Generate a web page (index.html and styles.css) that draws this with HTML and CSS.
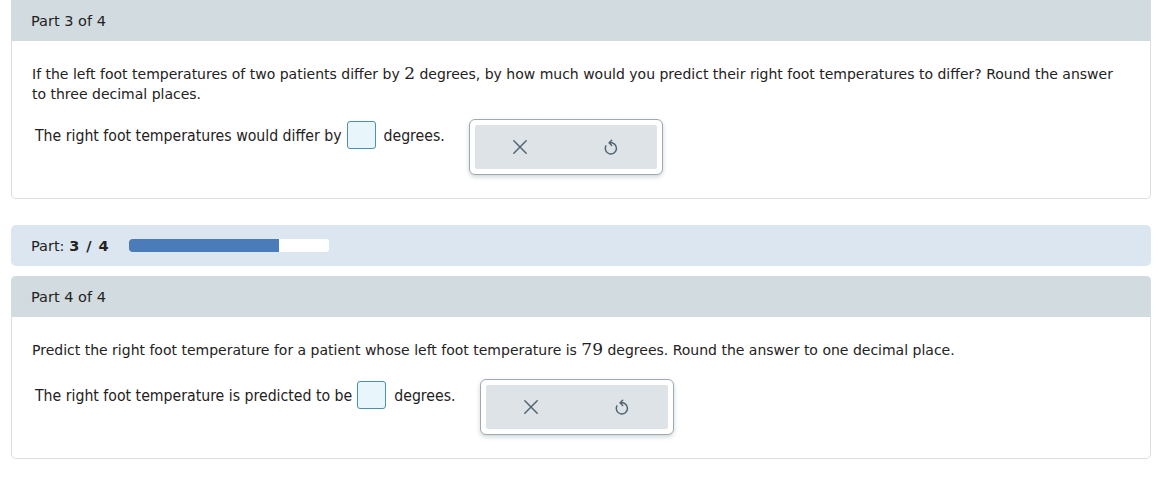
FILE: index.html
```html
<!DOCTYPE html>
<html>
<head>
<meta charset="utf-8">
<link rel="stylesheet" href="styles.css">
</head>
<body>
<div class="page">
  <section class="card">
    <div class="card-head">Part 3 of 4</div>
    <div class="card-body">
      <p class="question">If the left foot temperatures of two patients differ by <span class="num">2</span> degrees, by how much would you predict their right foot temperatures to differ? Round the answer to three decimal places.</p>
      <div class="answer">
        <span class="answer-text">The right foot temperatures would differ by</span>
        <span class="box"></span>
        <span class="answer-text unit">degrees.</span>
        <div class="tools">
          <div class="tools-inner">
            <svg class="ico" width="18" height="18" viewBox="0 0 16 16"><path d="M2.5 2.5 L13.5 13.5 M13.5 2.5 L2.5 13.5" stroke="#4f6470" stroke-width="1.3" fill="none" stroke-linecap="round"/></svg>
            <svg class="ico" width="18" height="18" viewBox="0 0 16 16"><path d="M6.6 4.4 A5 5 0 1 1 3.4 7" stroke="#4f6470" stroke-width="1.3" fill="none" stroke-linecap="round"/><path d="M8.6 2 L6.4 4.3 L8.6 6.6" stroke="#4f6470" stroke-width="1.3" fill="none" stroke-linecap="round" stroke-linejoin="round"/></svg>
          </div>
        </div>
      </div>
    </div>
  </section>

  <div class="progress">
    <span class="plabel">Part: <b>3 / 4</b></span>
    <div class="track"><div class="fill" style="width:75%"></div></div>
  </div>

  <section class="card card2">
    <div class="card-head">Part 4 of 4</div>
    <div class="card-body">
      <p class="question">Predict the right foot temperature for a patient whose left foot temperature is <span class="num">79</span> degrees. Round the answer to one decimal place.</p>
      <div class="answer answer2">
        <span class="answer-text">The right foot temperature is predicted to be</span>
        <span class="box"></span>
        <span class="answer-text unit">degrees.</span>
        <div class="tools">
          <div class="tools-inner">
            <svg class="ico" width="18" height="18" viewBox="0 0 16 16"><path d="M2.5 2.5 L13.5 13.5 M13.5 2.5 L2.5 13.5" stroke="#4f6470" stroke-width="1.3" fill="none" stroke-linecap="round"/></svg>
            <svg class="ico" width="18" height="18" viewBox="0 0 16 16"><path d="M6.6 4.4 A5 5 0 1 1 3.4 7" stroke="#4f6470" stroke-width="1.3" fill="none" stroke-linecap="round"/><path d="M8.6 2 L6.4 4.3 L8.6 6.6" stroke="#4f6470" stroke-width="1.3" fill="none" stroke-linecap="round" stroke-linejoin="round"/></svg>
          </div>
        </div>
      </div>
    </div>
  </section>
</div>
</body>
</html>
```

FILE: styles.css
```css
html, body {
  margin: 0;
  padding: 0;
  background: #ffffff;
}
body {
  font-family: "DejaVu Sans", Verdana, sans-serif;
  font-size: 14px;
  color: #222222;
}
.page {
  width: 1140px;
  margin-left: 11px;
}
.card {
  border: 1px solid #dcdfe1;
  border-top: none;
  border-radius: 0 0 5px 5px;
  background: #fff;
}
.card2 {
  margin-top: 10px;
  border-radius: 5px;
}
.card2 .card-head {
  border-radius: 5px 5px 0 0;
}
.card-head {
  background: #d2dbdf;
  height: 41px;
  display: flex;
  align-items: center;
  padding-left: 20px;
  margin: 0 -1px;
  font-size: 14.5px;
  color: #222;
}
.card-body {
  padding: 22px 20px 23px 20px;
}
.question {
  margin: 0;
  line-height: 20px;
  font-size: 14px;
}
.num {
  font-family: "DejaVu Serif", "Liberation Serif", serif;
  font-size: 17px;
}
.answer {
  display: flex;
  align-items: flex-start;
  margin-top: 17px;
  padding-left: 3px;
}
.answer2 {
  margin-top: 21px;
}
.answer-text {
  font-family: "DejaVu Sans Condensed", "DejaVu Sans", sans-serif;
  font-size: 15.7px;
  line-height: 20px;
  margin-top: 5px;
}
.box {
  width: 27px;
  height: 26px;
  border: 1px solid #4e8fae;
  border-radius: 3px;
  background: #e8f6fb;
  margin-left: 5px;
}
.unit {
  margin-left: 8px;
}
.tools {
  margin-left: 24px;
  margin-top: -2px;
  border: 1px solid #9eaab1;
  border-radius: 6px;
  padding: 5px;
  background: #fff;
  box-shadow: 0 2px 4px rgba(60, 90, 100, 0.25);
}
.tools-inner {
  width: 182px;
  height: 44px;
  background: #dde3e6;
  border-radius: 2px;
  display: flex;
  align-items: center;
  justify-content: space-around;
}
.progress {
  margin-top: 26px;
  height: 41px;
  background: #dbe6f0;
  border-radius: 5px;
  display: flex;
  align-items: center;
  padding-left: 20px;
}
.plabel {
  font-size: 14.5px;
  width: 98px;
}
.plabel b {
  font-weight: bold;
  letter-spacing: 1px;
}
.track {
  width: 200px;
  height: 13px;
  background: #ffffff;
  border-radius: 3px;
  overflow: hidden;
}
.fill {
  height: 100%;
  background: #4a7cb9;
  border-radius: 3px 0 0 3px;
}
```
